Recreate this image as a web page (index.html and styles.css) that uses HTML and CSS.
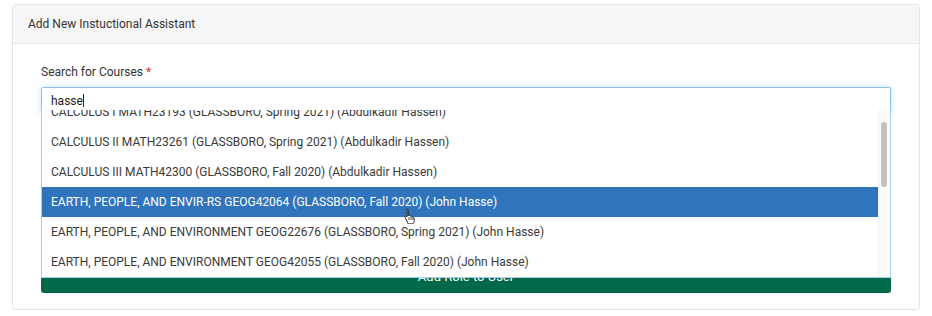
FILE: index.html
```html
<!DOCTYPE html>
<html lang="en">
<head>
<meta charset="utf-8">
<title>Add New Instuctional Assistant</title>
<link rel="stylesheet" href="styles.css">
</head>
<body>
<div class="page">
  <div class="card">
    <div class="card-header">Add New Instuctional Assistant</div>
    <div class="card-body">
      <label class="field-label">Search for Courses <span class="req">*</span></label>
      <div class="combo">
        <div class="input">hasse<span class="caret"></span></div>
        <div class="dropdown">
          <div class="list">
            <div class="list-inner">
              <div class="item">CALCULUS I MATH23193 (GLASSBORO, Spring 2021) (Abdulkadir Hassen)</div>
              <div class="item">CALCULUS II MATH23261 (GLASSBORO, Spring 2021) (Abdulkadir Hassen)</div>
              <div class="item">CALCULUS III MATH42300 (GLASSBORO, Fall 2020) (Abdulkadir Hassen)</div>
              <div class="item active">EARTH, PEOPLE, AND ENVIR-RS GEOG42064 (GLASSBORO, Fall 2020) (John Hasse)</div>
              <div class="item">EARTH, PEOPLE, AND ENVIRONMENT GEOG22676 (GLASSBORO, Spring 2021) (John Hasse)</div>
              <div class="item">EARTH, PEOPLE, AND ENVIRONMENT GEOG42055 (GLASSBORO, Fall 2020) (John Hasse)</div>
            </div>
          </div>
          <div class="scrolltrack"><div class="thumb"></div></div>
          <svg class="cursor" width="14" height="16" viewBox="0 0 14 16" aria-hidden="true">
            <path d="M4 1.2c.8 0 1.3.6 1.3 1.3v5l.4-.1c.7-.2 1.4.2 1.6.8l.2-.1c.7-.2 1.4.2 1.6.8.7-.2 1.5.2 1.7.9l.4 1.6c.3 1.4 0 2.7-.8 3.8l-.5.7H5.3L2.4 10.2c-.4-.6-.3-1.4.3-1.8.5-.3 1.1-.2 1.5.2V2.5C2.7 1.8 3.2 1.2 4 1.2z" fill="#fff" stroke="#222" stroke-width="1"/>
            <path d="M6 9v3M8 9v3M10 9.6v2.4" stroke="#222" stroke-width=".8"/>
          </svg>
        </div>
      </div>
      <button class="btn">Add Role to User</button>
    </div>
  </div>
</div>
</body>
</html>
```
FILE: styles.css
```css
* { box-sizing: border-box; }
body {
  margin: 0;
  background: #fff;
  font-family: Roboto, "Liberation Sans", sans-serif;
  font-size: 12px;
  color: #333;
}
.page { padding: 4px 12px 0 12px; }
.card {
  border: 1px solid #e4e4e4;
  border-radius: 3px;
  background: #fff;
}
.card-header {
  height: 39px;
  line-height: 38px;
  padding: 0 15px;
  background: #f6f6f7;
  border-bottom: 1px solid #e6e6e6;
  color: #333;
}
.card-body { padding: 20px 28px 16px 28px; }
.field-label {
  display: block;
  line-height: 16px;
  margin-bottom: 7px;
  color: #333;
}
.req { color: #c0392b; }
.combo { position: relative; }
.input {
  height: 28px;
  line-height: 26px;
  padding: 0 9px;
  border: 1px solid #8fc0ea;
  border-radius: 2px;
  box-shadow: 0 0 6px rgba(102, 175, 233, 0.35);
  color: #222;
  background: #fff;
}
.caret {
  display: inline-block;
  width: 1px;
  height: 13px;
  background: #222;
  vertical-align: -2px;
}
.dropdown {
  position: absolute;
  top: 23px;
  left: 0;
  right: 0;
  height: 168px;
  display: flex;
  background: #fff;
  border: 1px solid #a9cdee;
  border-top: none;
  z-index: 2;
}
.list { flex: 1; overflow: hidden; }
.list-inner { margin-top: -13px; }
.item {
  line-height: 18px;
  padding: 6px 9px 6px 9px;
  white-space: nowrap;
  color: #3a3a3a;
}
.item.active {
  background: #2f74bc;
  color: #fff;
  margin-left: -1px;
  padding-left: 10px;
}
.scrolltrack {
  width: 12px;
  background: #fcfcfd;
  border-left: 1px solid #f0f0f2;
  padding: 12px 2px 0 2px;
}
.thumb {
  width: 6px;
  height: 65px;
  border-radius: 3px;
  background: #c2c2c4;
}
.cursor {
  position: absolute;
  left: 361px;
  top: 98px;
}
.btn {
  display: block;
  width: 100%;
  height: 34px;
  margin-top: 144px;
  border: none;
  border-radius: 3px;
  background: #00694a;
  color: #fff;
  font-family: Roboto, "Liberation Sans", sans-serif;
  font-size: 13px;
  padding: 0;
}
```
